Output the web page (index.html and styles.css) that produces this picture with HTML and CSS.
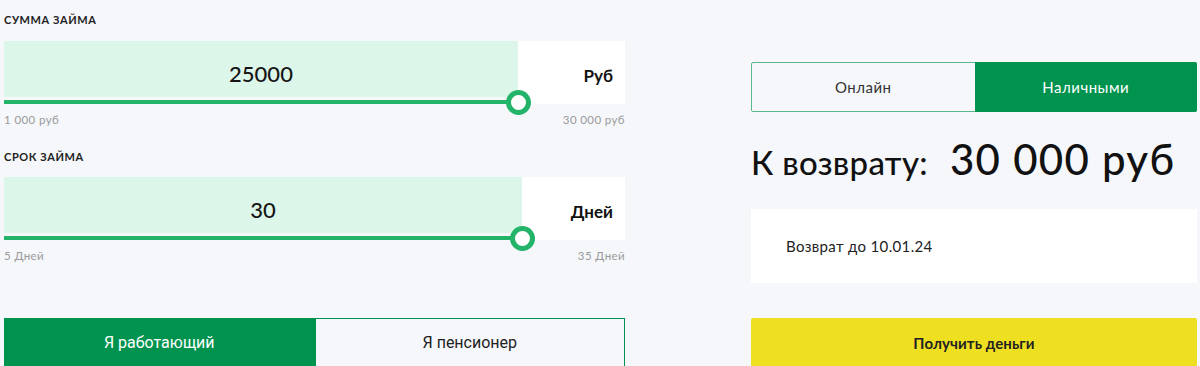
FILE: index.html
```html
<!DOCTYPE html>
<html lang="ru">
<head>
<meta charset="utf-8">
<link rel="stylesheet" href="styles.css">
</head>
<body>
<div class="calc">
  <div class="left">
    <div class="field">
      <div class="label">СУММА ЗАЙМА</div>
      <div class="range">
        <div class="range-value" style="width:514px">25000</div>
        <div class="range-unit">Руб</div>
        <div class="track" style="width:514px"></div>
        <div class="thumb" style="left:502px"></div>
      </div>
      <div class="limits"><span>1 000 руб</span><span>30 000 руб</span></div>
    </div>
    <div class="field field-2">
      <div class="label">СРОК ЗАЙМА</div>
      <div class="range">
        <div class="range-value" style="width:518px">30</div>
        <div class="range-unit">Дней</div>
        <div class="track" style="width:518px"></div>
        <div class="thumb" style="left:506px"></div>
      </div>
      <div class="limits"><span>5 Дней</span><span>35 Дней</span></div>
    </div>
    <div class="who">
      <div class="who-btn active">Я работающий</div>
      <div class="who-btn">Я пенсионер</div>
    </div>
  </div>
  <div class="right">
    <div class="toggle">
      <div class="toggle-btn">Онлайн</div>
      <div class="toggle-btn active">Наличными</div>
    </div>
    <div class="total">
      <span class="total-label">К возврату:</span>
      <span class="total-sum">30 000 руб</span>
    </div>
    <div class="due">Возврат до 10.01.24</div>
    <div class="get">Получить деньги</div>
  </div>
</div>
</body>
</html>
```
FILE: styles.css
```css
* { box-sizing: border-box; }
html, body {
  margin: 0;
  padding: 0;
  background: #f5f7fb;
  font-family: "Lato", "Open Sans", sans-serif;
  color: #1a1a1a;
  height: 366px;
  overflow: hidden;
}
.calc {
  display: flex;
  padding-left: 4px;
  gap: 126px;
}
.left {
  width: 621px;
  display: flex;
  flex-direction: column;
}
.label {
  font-size: 11px;
  font-weight: 700;
  color: #222;
  line-height: 14px;
  padding-top: 13px;
  letter-spacing: 0.6px;
}
.range {
  position: relative;
  margin-top: 14px;
  height: 63px;
  display: flex;
}
.range-value {
  background: #dcf6ea;
  height: 56px;
  display: flex;
  align-items: center;
  justify-content: center;
  font-size: 22px;
  font-weight: 500;
  padding-top: 8px;
  color: #151515;
}
.range-unit {
  flex: 1;
  background: #fff;
  display: flex;
  align-items: center;
  justify-content: flex-end;
  padding-right: 12px;
  padding-top: 6px;
  font-size: 17px;
  font-weight: 700;
  color: #111;
}
.track {
  position: absolute;
  left: 0;
  top: 59px;
  height: 4px;
  background: #23b46a;
}
.thumb {
  position: absolute;
  top: 49px;
  width: 25px;
  height: 25px;
  border-radius: 50%;
  background: #fff;
  border: 5px solid #23b46a;
}
.limits {
  display: flex;
  justify-content: space-between;
  font-size: 11.5px;
  color: #9a9a9a;
  margin-top: 9px;
  line-height: 14px;
  letter-spacing: 0.4px;
}
.field-2 .label { padding-top: 23px; }
.field-2 .range { margin-top: 13px; }
.field-2 .limits { margin-top: 9px; }
.who {
  display: flex;
  margin-top: 55px;
  height: 50px;
  font-family: "Roboto", "Liberation Sans", sans-serif;
  font-size: 16px;
}
.who-btn {
  flex: 1;
  display: flex;
  align-items: center;
  justify-content: center;
  border: 1px solid #00934f;
  color: #222;
  padding-bottom: 2px;
}
.who-btn.active {
  background: #00934f;
  color: #fff;
}
.right {
  width: 446px;
  display: flex;
  flex-direction: column;
}
.toggle {
  margin-top: 62px;
  height: 50px;
  display: flex;
  border: 1px solid #5cb88a;
  border-radius: 2px;
}
.toggle-btn {
  flex: 1;
  display: flex;
  align-items: center;
  justify-content: center;
  font-size: 15px;
  color: #333;
  letter-spacing: 0.5px;
}
.toggle-btn.active {
  background: #00934f;
  color: #fff;
  margin: -1px -1px -1px 0;
  border-radius: 0 2px 2px 0;
}
.total {
  display: flex;
  align-items: baseline;
  margin-top: 22px;
  height: 53px;
  white-space: nowrap;
}
.total-label {
  font-size: 33px;
  font-weight: 500;
  color: #111;
  letter-spacing: 0.3px;
}
.total-sum {
  margin-left: 22px;
  font-size: 42px;
  font-weight: 500;
  color: #111;
  letter-spacing: 1.3px;
}
.due {
  margin-top: 22px;
  height: 74px;
  background: #fff;
  display: flex;
  align-items: center;
  padding-left: 35px;
  font-size: 15px;
  color: #222;
  letter-spacing: 0.35px;
}
.get {
  margin-top: 35px;
  height: 50px;
  background: #eedf21;
  border-radius: 2px;
  display: flex;
  align-items: center;
  justify-content: center;
  font-size: 15px;
  font-weight: 700;
  color: #222;
  letter-spacing: 0.1px;
}
```
